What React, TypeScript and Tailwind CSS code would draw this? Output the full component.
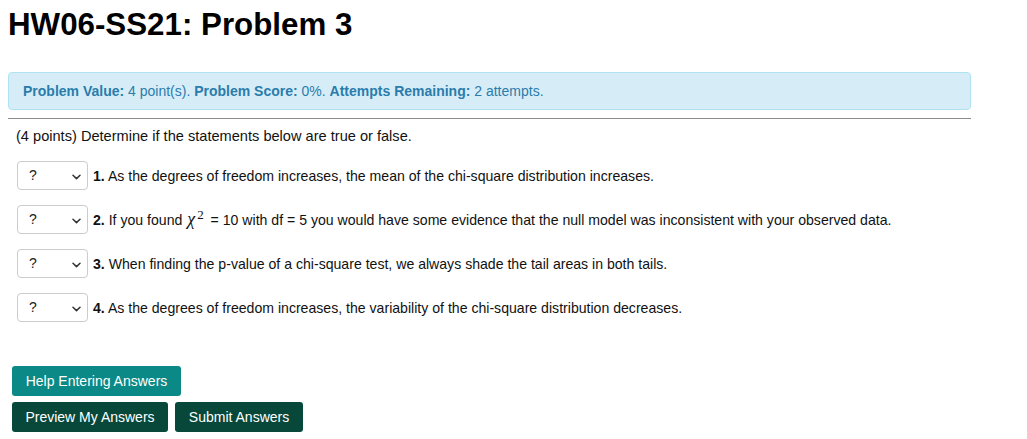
import React from "react";

const font = { fontFamily: '"Liberation Sans", Arial, Helvetica, sans-serif' };

function Chevron() {
  return (
    <svg width="9" height="6" viewBox="0 0 9 6" className="absolute right-[6px] top-[12px]">
      <path d="M1 1.2 L4.5 4.6 L8 1.2" fill="none" stroke="#333" strokeWidth="1.5" strokeLinecap="round" strokeLinejoin="round" />
    </svg>
  );
}

function Row({ children }: { children: React.ReactNode }) {
  return (
    <div className="flex items-center h-[29px] mb-[15px]">
      <div className="relative w-[71px] h-[29px] border border-[#cccccc] rounded-[4px] bg-white ml-[1px] shrink-0">
        <span className="absolute left-[11px] top-[5px] text-[14px] leading-[16px] text-[#222]">?</span>
        <Chevron />
      </div>
      <div className="ml-[5px] text-[14.1px] text-[#111] leading-[16px]">{children}</div>
    </div>
  );
}

export default function App() {
  return (
    <div style={font} className="bg-white w-[1027px] h-[439px] overflow-hidden text-[#111]">
      <div className="pl-[8px] pr-[56px]">
        <h1 className="text-[31.3px] font-bold leading-none pt-[9px] text-black">HW06-SS21: Problem 3</h1>
        <div className="mt-[32px] h-[38px] border border-[#aee4f1] bg-[#d6edf8] rounded-[4px] flex items-center pl-[14px] text-[14px] text-[#2a7cab]">
          <span>
            <b>Problem Value:</b> 4 point(s). <b>Problem Score:</b> 0%. <b>Attempts Remaining:</b> 2 attempts.
          </span>
        </div>
        <div className="mt-[8px] h-[1px] bg-[#8a8a8a]" />
        <div className="pl-[8px]">
          <div className="mt-[9px] text-[14.6px] text-[#111] leading-[16px]">(4 points) Determine if the statements below are true or false.</div>
          <div className="mt-[17px]">
            <Row>
              <b>1.</b> As the degrees of freedom increases, the mean of the chi-square distribution increases.
            </Row>
            <Row>
              <b>2.</b> If you found{" "}
              <span style={{ fontFamily: '"Liberation Serif", "DejaVu Serif", serif' }} className="italic text-[18px] ml-[1px] text-[#111]">χ</span>
              <sup className="text-[13px] ml-[2px] mr-[3px] text-[#111]" style={{ fontFamily: '"Liberation Serif", serif' }}>2</sup> = 10 with df = 5 you would have some evidence that the null model was inconsistent with your observed data.
            </Row>
            <Row>
              <b>3.</b> When finding the p-value of a chi-square test, we always shade the tail areas in both tails.
            </Row>
            <Row>
              <b>4.</b> As the degrees of freedom increases, the variability of the chi-square distribution decreases.
            </Row>
          </div>
        </div>
        <div className="mt-[44px] pl-[4px] flex flex-col gap-[6px]">
          <div>
            <button className="h-[30px] w-[169px] rounded-[3px] bg-[#0a8986] text-white text-[14px]">Help Entering Answers</button>
          </div>
          <div className="flex gap-[7px]">
            <button className="h-[30px] w-[156px] rounded-[3px] bg-[#07483b] text-white text-[14px]">Preview My Answers</button>
            <button className="h-[30px] w-[128px] rounded-[3px] bg-[#07483b] text-white text-[14px]">Submit Answers</button>
          </div>
        </div>
      </div>
    </div>
  );
}
